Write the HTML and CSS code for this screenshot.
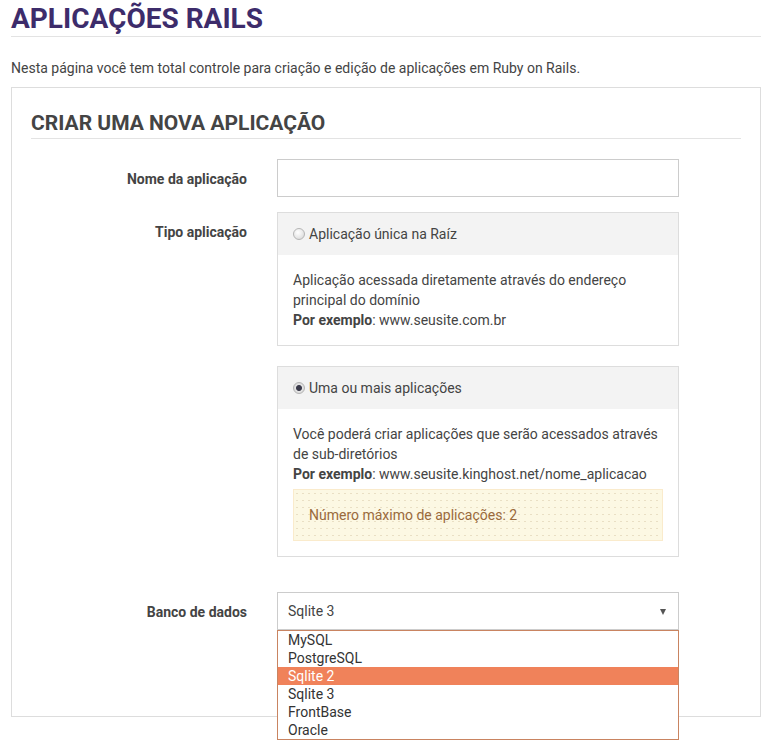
FILE: index.html
```
<!DOCTYPE html>
<html lang="pt-BR">
<head>
    <meta charset="UTF-8">
    <meta name="viewport" content="width=device-width, initial-scale=1.0">
    <title>Aplicações Rails</title>
    <link rel="stylesheet" href="styles.css">
</head>
<body>
    <h1 class="page-title">APLICAÇÕES RAILS</h1>
    <p class="intro">Nesta página você tem total controle para criação e edição de aplicações em Ruby on Rails.</p>

    <div class="box">
        <h2 class="box-title">CRIAR UMA NOVA APLICAÇÃO</h2>

        <form class="app-form">
            <label class="form-label" for="appName">Nome da aplicação</label>
            <div class="form-field">
                <input type="text" id="appName" class="text-input">
            </div>

            <div class="form-label">Tipo aplicação</div>
            <div class="form-field">
                <div class="panel">
                    <label class="panel-head">
                        <input type="radio" name="appType" class="radio">
                        <span>Aplicação única na Raíz</span>
                    </label>
                    <div class="panel-body">
                        Aplicação acessada diretamente através do endereço principal do domínio<br>
                        <b>Por exemplo</b>: www.seusite.com.br
                    </div>
                </div>
                <div class="panel">
                    <label class="panel-head">
                        <input type="radio" name="appType" class="radio" checked>
                        <span>Uma ou mais aplicações</span>
                    </label>
                    <div class="panel-body">
                        Você poderá criar aplicações que serão acessados através de sub-diretórios<br>
                        <b>Por exemplo</b>: www.seusite.kinghost.net/nome_aplicacao
                        <div class="alert">Número máximo de aplicações: 2</div>
                    </div>
                </div>
            </div>

            <div class="form-label">Banco de dados</div>
            <div class="form-field select-wrap">
                <div class="select">Sqlite 3<span class="select-arrow"></span></div>
                <ul class="select-list">
                    <li>MySQL</li>
                    <li>PostgreSQL</li>
                    <li class="active">Sqlite 2</li>
                    <li>Sqlite 3</li>
                    <li>FrontBase</li>
                    <li>Oracle</li>
                </ul>
            </div>
        </form>
    </div>
</body>
</html>
```

FILE: styles.css
```
body {
    margin: 0;
    padding: 0 9px 40px 11px;
    font-family: Roboto, "Liberation Sans", Arial, sans-serif;
    font-size: 14px;
    line-height: 20px;
    color: #444;
    background: #fff;
}

.page-title {
    margin: 3px 0 0;
    padding-bottom: 2px;
    font-size: 28px;
    line-height: 31px;
    font-weight: 700;
    color: #3d2c6b;
    border-bottom: 1px solid #e3e3e3;
}

.intro {
    margin: 21px 0 9px;
}

.box {
    border: 1px solid #ddd;
    padding: 23px 19px 0;
    height: 605px;
}

.box-title {
    margin: 0;
    padding-bottom: 3px;
    font-size: 21px;
    line-height: 24px;
    font-weight: 700;
    color: #444;
    border-bottom: 1px solid #e3e3e3;
}

.app-form {
    display: grid;
    grid-template-columns: 216px 402px;
    align-items: start;
    column-gap: 30px;
    row-gap: 15px;
    margin-top: 20px;
}

.form-label {
    padding-top: 10px;
    text-align: right;
    font-weight: 700;
    color: #444;
}

.text-input {
    display: block;
    box-sizing: border-box;
    width: 100%;
    height: 38px;
    margin: 0;
    border: 1px solid #ccc;
    padding: 0 10px;
    font: inherit;
}

.panel {
    border: 1px solid #ddd;
    margin-bottom: 20px;
}

.panel-head {
    display: flex;
    align-items: center;
    gap: 4px;
    padding: 10px 15px;
    line-height: 22px;
    background: #f3f3f3;
    cursor: pointer;
}

.radio {
    appearance: none;
    -webkit-appearance: none;
    margin: 0;
    width: 12px;
    height: 12px;
    border-radius: 50%;
    border: 1px solid #b5b5b5;
    background: radial-gradient(circle at 40% 35%, #fff 0%, #e6e6e6 60%, #cfcfcf 100%);
    flex-shrink: 0;
}

.radio:checked {
    background: radial-gradient(circle, #3a3a4a 0, #3a3a4a 2.5px, #e4e4e4 3.5px, #d0d0d0 100%);
}

.panel-body {
    padding: 15px;
}

.alert {
    margin-top: 5px;
    padding: 15px;
    border: 1px solid #faebcc;
    color: #9a6a3c;
    background-color: #fcf8e3;
    background-image: radial-gradient(circle, #e9dfc4 0.6px, transparent 1px);
    background-size: 6px 7px;
}

.select-wrap {
    position: relative;
}

.select {
    position: relative;
    box-sizing: border-box;
    height: 38px;
    border: 1px solid #ccc;
    padding: 8px 10px;
    color: #444;
}

.select-arrow {
    position: absolute;
    right: 12px;
    top: 16px;
    border-left: 3px solid transparent;
    border-right: 3px solid transparent;
    border-top: 6px solid #555;
}

.select-list {
    position: absolute;
    z-index: 5;
    top: 38px;
    left: 0;
    right: 0;
    margin: 0;
    padding: 0;
    list-style: none;
    background: #fff;
    border: 1px solid #c98461;
    color: #333;
}

.select-list li {
    padding-left: 10px;
    line-height: 18px;
}

.select-list .active {
    background: #f0825a;
    color: #fff;
}
```
